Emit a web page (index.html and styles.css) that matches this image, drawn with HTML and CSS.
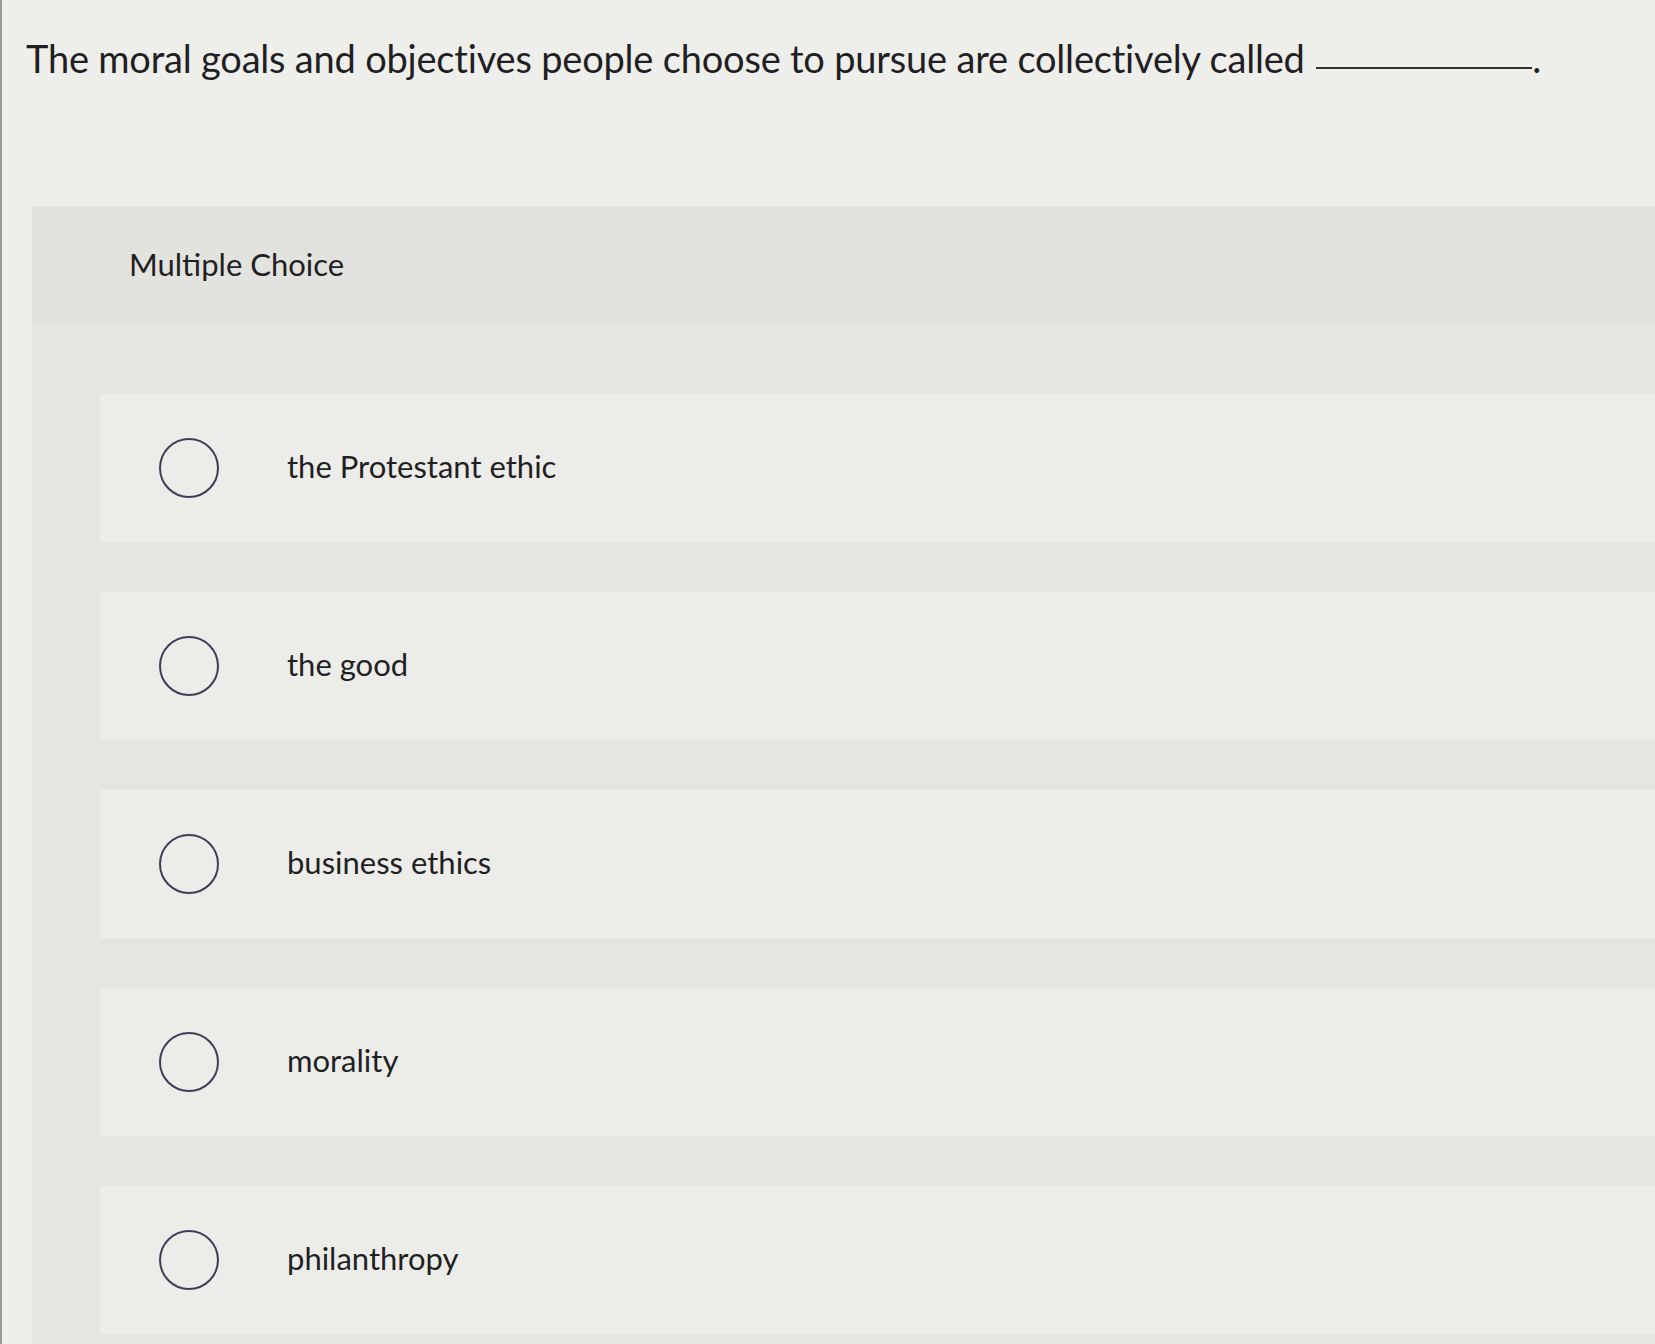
FILE: index.html
```html
<!DOCTYPE html>
<html lang="en">
<head>
<meta charset="utf-8">
<title>Multiple Choice</title>
<link rel="stylesheet" href="styles.css">
</head>
<body>
<div class="screen">
  <p class="question">The moral goals and objectives people choose to pursue are collectively called <span class="blank"></span>.</p>
  <section class="panel">
    <h2 class="panel-title">Multiple Choice</h2>
    <ul class="options">
      <li class="option"><span class="radio"></span><span class="label">the Protestant ethic</span></li>
      <li class="option"><span class="radio"></span><span class="label">the good</span></li>
      <li class="option"><span class="radio"></span><span class="label">business ethics</span></li>
      <li class="option"><span class="radio"></span><span class="label">morality</span></li>
      <li class="option"><span class="radio"></span><span class="label">philanthropy</span></li>
    </ul>
  </section>
</div>
</body>
</html>
```
FILE: styles.css
```css
html, body {
  margin: 0;
  padding: 0;
  background: #eeeeeb;
}
body {
  font-family: "Lato", "Liberation Sans", sans-serif;
  color: #1f1f24;
}
.screen {
  height: 1344px;
  overflow: hidden;
  border-left: 2px solid #9a9a98;
  box-sizing: border-box;
}
.question {
  margin: 0;
  padding: 35px 0 0 24px;
  font-size: 38px;
  line-height: 46px;
  height: 170px;
  box-sizing: border-box;
  letter-spacing: -0.2px;
}
.blank {
  display: inline-block;
  width: 216px;
  border-bottom: 2px solid #333;
  margin-left: 2px;
  vertical-align: 4px;
}
.panel {
  margin: 36px 0 0 30px;
  background: #e5e5e2;
  padding-bottom: 40px;
}
.panel-title {
  margin: 0;
  height: 116px;
  display: flex;
  align-items: center;
  padding-left: 97px;
  font-size: 31px;
  font-weight: 400;
  background: #e2e2df;
}
.options {
  list-style: none;
  margin: 72px 0 0 68px;
  padding: 0;
  display: flex;
  flex-direction: column;
  gap: 50px;
}
.option {
  height: 148px;
  background: #ecece9;
  display: flex;
  align-items: center;
  padding-left: 59px;
}
.radio {
  width: 60px;
  height: 60px;
  border: 2px solid #3e3d5c;
  border-radius: 50%;
  box-sizing: border-box;
  flex: none;
}
.label {
  margin-left: 68px;
  font-size: 31px;
  position: relative;
  top: -2px;
}
```
